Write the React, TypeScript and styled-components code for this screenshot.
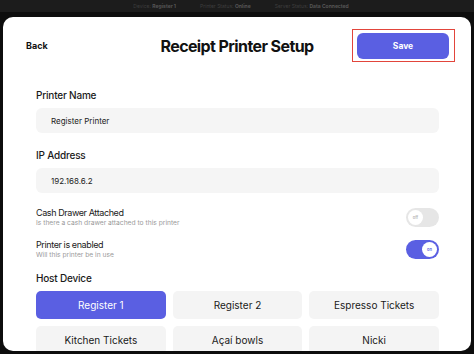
import React, { useState } from 'react';
import styled, { createGlobalStyle } from 'styled-components';

const GlobalStyle = createGlobalStyle`
  html, body {
    margin: 0;
    padding: 0;
    background: #0d0d0d;
    font-family: Inter, "Noto Sans", sans-serif;
    -webkit-font-smoothing: antialiased;
  }
  * { box-sizing: border-box; }
`;

const hosts = ['Register 1', 'Register 2', 'Espresso Tickets', 'Kitchen Tickets', 'Açaí bowls', 'Nicki'];

const Toggle = (props: { on: boolean; onClick: () => void }) => {
  const { on, onClick } = props;
  return (
    <Track $on={on} onClick={onClick}>
      <Knob $on={on}>{on ? 'on' : 'off'}</Knob>
    </Track>
  );
};

const App = () => {
  const [drawer, setDrawer] = useState(false);
  const [enabled, setEnabled] = useState(true);
  const [host, setHost] = useState('Register 1');

  return (
    <Screen>
      <GlobalStyle />
      <StatusBar>
        <StatusItem>Device: <b>Register 1</b></StatusItem>
        <StatusItem>Printer Status: <b>Online</b></StatusItem>
        <StatusItem>Server Status: <b>Data Connected</b></StatusItem>
      </StatusBar>
      <Sheet>
        <Header>
          <BackLink>Back</BackLink>
          <Title>Receipt Printer Setup</Title>
          <SaveFrame>
            <SaveButton>Save</SaveButton>
          </SaveFrame>
        </Header>
        <Body>
          <Label>Printer Name</Label>
          <Field>Register Printer</Field>
          <Label $top={15}>IP Address</Label>
          <Field>192.168.6.2</Field>
          <SettingRow $top={14}>
            <SettingText>
              <SettingTitle>Cash Drawer Attached</SettingTitle>
              <SettingHint>Is there a cash drawer attached to this printer</SettingHint>
            </SettingText>
            <Toggle on={drawer} onClick={() => setDrawer(!drawer)} />
          </SettingRow>
          <SettingRow $top={11}>
            <SettingText>
              <SettingTitle>Printer is enabled</SettingTitle>
              <SettingHint>Will this printer be in use</SettingHint>
            </SettingText>
            <Toggle on={enabled} onClick={() => setEnabled(!enabled)} />
          </SettingRow>
          <Label $top={11}>Host Device</Label>
          <HostGrid>
            {hosts.map((h) => (
              <HostButton key={h} $active={h === host} onClick={() => setHost(h)}>
                {h}
              </HostButton>
            ))}
          </HostGrid>
        </Body>
      </Sheet>
    </Screen>
  );
};

const Screen = styled.div`
  width: 474px;
  height: 354px;
  overflow: hidden;
  background: #0d0d0d;
`;

const StatusBar = styled.div`
  height: 12px;
  background: #1c1c1c;
  display: flex;
  justify-content: center;
  align-items: center;
  gap: 24px;
  padding-left: 8px;
`;

const StatusItem = styled.span`
  font-size: 5px;
  color: #3e3e3e;

  b {
    color: #555;
  }
`;

const Sheet = styled.div`
  margin: 5px 3px 0;
  height: 334px;
  background: #fff;
  border-radius: 10px;
  overflow: hidden;
`;

const Header = styled.div`
  display: grid;
  grid-template-columns: 1fr auto 1fr;
  align-items: center;
  padding: 12px 16px 0 16px;
`;

const BackLink = styled.div`
  padding-left: 7px;
  font-size: 9px;
  font-weight: 700;
  color: #111;
`;

const Title = styled.h1`
  margin: 0;
  font-size: 16px;
  font-weight: 700;
  color: #111;
  letter-spacing: -0.6px;
`;

const SaveFrame = styled.div`
  justify-self: end;
  display: flex;
  border: 1px solid #e2453b;
  padding: 3px 5px 2px 4px;
`;

const SaveButton = styled.button`
  width: 92px;
  height: 26px;
  border: none;
  border-radius: 6px;
  background: #5a5fe2;
  color: #fff;
  font-family: inherit;
  font-size: 8.5px;
  font-weight: 700;
`;

const Body = styled.div`
  padding: 26px 32px 0 33px;
  display: flex;
  flex-direction: column;
`;

const Label = styled.div<{ $top?: number }>`
  margin-top: ${(p) => p.$top || 0}px;
  margin-bottom: 6px;
  font-size: 10px;
  line-height: 14px;
  font-weight: 500;
  letter-spacing: -0.2px;
  color: #1a1a1a;
`;

const Field = styled.div`
  height: 25px;
  border-radius: 6px;
  background: #f5f5f5;
  padding: 0 15px;
  display: flex;
  align-items: center;
  font-size: 8px;
  color: #222;
`;

const SettingRow = styled.div<{ $top: number }>`
  margin-top: ${(p) => p.$top}px;
  display: flex;
  align-items: center;
  justify-content: space-between;
`;

const SettingText = styled.div`
  display: flex;
  flex-direction: column;
`;

const SettingTitle = styled.div`
  font-size: 9px;
  line-height: 12px;
  letter-spacing: -0.4px;
  color: #1a1a1a;
`;

const SettingHint = styled.div`
  font-size: 6.7px;
  line-height: 9px;
  color: #9a9a9a;
`;

const Track = styled.div<{ $on: boolean }>`
  width: 33px;
  height: 19px;
  border-radius: 10px;
  padding: 2px;
  background: ${(p) => (p.$on ? '#5a5fe2' : '#e6e6e6')};
  display: flex;
  justify-content: ${(p) => (p.$on ? 'flex-end' : 'flex-start')};
`;

const Knob = styled.div<{ $on: boolean }>`
  width: 15px;
  height: 15px;
  border-radius: 50%;
  background: #fff;
  display: flex;
  align-items: center;
  justify-content: center;
  font-size: 4px;
  font-weight: 600;
  color: ${(p) => (p.$on ? '#5a5fe2' : '#b5b5b5')};
`;

const HostGrid = styled.div`
  display: grid;
  grid-template-columns: repeat(3, 1fr);
  gap: 7px;
`;

const HostButton = styled.button<{ $active: boolean }>`
  height: 28px;
  border: none;
  border-radius: 5px;
  background: ${(p) => (p.$active ? '#5a5fe2' : '#f4f4f4')};
  color: ${(p) => (p.$active ? '#fff' : '#1a1a1a')};
  font-family: inherit;
  font-size: 10px;
  padding: 0;
`;

export default App;
